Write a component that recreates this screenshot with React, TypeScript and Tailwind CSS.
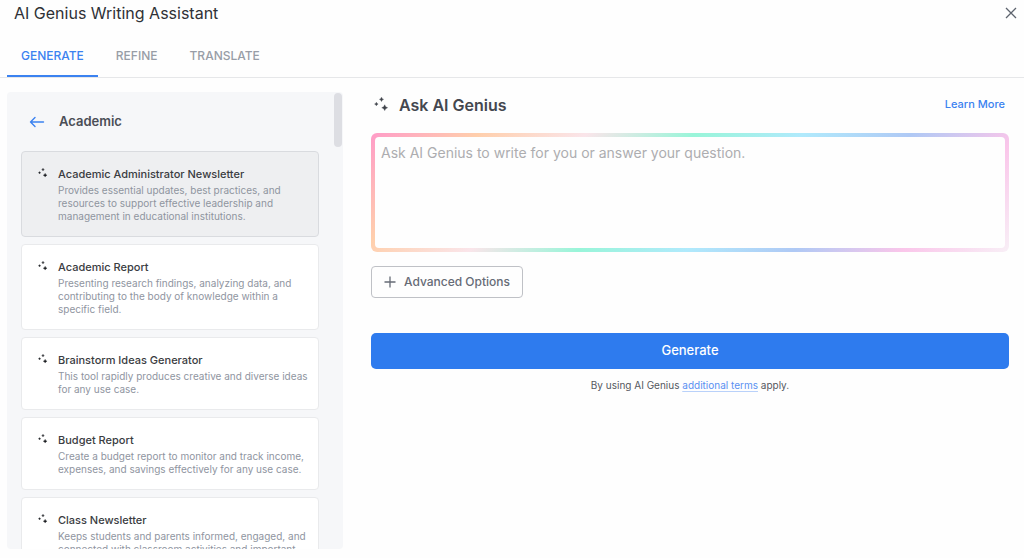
import { useState } from 'react';

const tabs = ['Generate', 'Refine', 'Translate'];

const templates = [
  {
    title: 'Academic Administrator Newsletter',
    description:
      'Provides essential updates, best practices, and resources to support effective leadership and management in educational institutions.',
  },
  {
    title: 'Academic Report',
    description:
      'Presenting research findings, analyzing data, and contributing to the body of knowledge within a specific field.',
  },
  {
    title: 'Brainstorm Ideas Generator',
    description: 'This tool rapidly produces creative and diverse ideas for any use case.',
  },
  {
    title: 'Budget Report',
    description:
      'Create a budget report to monitor and track income, expenses, and savings effectively for any use case.',
  },
  {
    title: 'Class Newsletter',
    description: 'Keeps students and parents informed, engaged, and connected with classroom activities and important',
  },
];

function Sparkles({ className }: { className: string }) {
  return (
    <svg viewBox="0 0 16 16" fill="currentColor" stroke="currentColor" strokeWidth="0.4" aria-hidden="true" className={className}>
      <path d="M8 0.2Q8.5 2 10.2 2.5Q8.5 3 8 4.8Q7.5 3 5.8 2.5Q7.5 2 8 0.2Z" />
      <path d="M2.5 5.6Q2.9 7.1 4.4 7.5Q2.9 7.9 2.5 9.4Q2.1 7.9 0.6 7.5Q2.1 7.1 2.5 5.6Z" />
      <path d="M11.4 8.3Q11.9 10.9 14.5 11.4Q11.9 11.9 11.4 14.5Q10.9 11.9 8.3 11.4Q10.9 10.9 11.4 8.3Z" />
    </svg>
  );
}

export default function App() {
  const [activeTab, setActiveTab] = useState('Generate');
  const [selected, setSelected] = useState(0);
  const [prompt, setPrompt] = useState('');

  return (
    <div className="flex h-screen flex-col bg-[#fefefe] pb-[9px] font-[Inter,sans-serif] text-[#3a3d44]">
      {/* Title bar */}
      <header className="flex h-[26px] shrink-0 items-center justify-between pr-[5px] pl-3.5">
        <h1 className="text-base leading-6 text-[#2f3136]">AI Genius Writing Assistant</h1>
        <button type="button" aria-label="Close" className="p-0.5 text-[#5d636e]">
          <svg viewBox="0 0 12 12" fill="none" stroke="currentColor" strokeWidth="1.3" className="size-3">
            <path d="M1 1L11 11M11 1L1 11" />
          </svg>
        </button>
      </header>

      {/* Tabs */}
      <nav className="flex h-[52px] shrink-0 gap-1 border-b border-[#e6e7e9] px-[7px]">
        {tabs.map((tab) => (
          <button
            key={tab}
            type="button"
            onClick={() => setActiveTab(tab)}
            className={`border-b-2 px-3.5 pt-2.5 pb-0 text-[12px] font-medium uppercase ${
              activeTab === tab ? 'border-[#3b82f0] text-[#3b82f0]' : 'border-transparent text-[#989da6]'
            }`}
          >
            {tab}
          </button>
        ))}
      </nav>

      <div className="flex min-h-0 flex-1 gap-7 pt-3.5 pr-[15px] pl-[7px]">
        {/* Template list */}
        <aside className="flex w-[336px] shrink-0 justify-between overflow-hidden rounded bg-[#f6f7f9]">
          <div className="min-h-0 flex-1 overflow-y-auto pr-[15px] pl-3.5 [scrollbar-width:none]">
            <div className="flex h-[59px] items-center gap-3.5 pl-2">
              <button type="button" aria-label="Back" className="text-[#3b82f0]">
                <svg viewBox="0 0 16 12" fill="none" stroke="currentColor" strokeWidth="1.4" strokeLinecap="round" strokeLinejoin="round" className="h-3 w-4">
                  <path d="M14.5 6H1.5M6 1.5L1.5 6L6 10.5" />
                </svg>
              </button>
              <h2 className="text-[13px] font-semibold text-[#4b4e56]">Academic</h2>
            </div>
            <ul className="flex flex-col gap-[7px]">
              {templates.map((item, i) => (
                <li key={item.title}>
                  <button
                    type="button"
                    onClick={() => setSelected(i)}
                    className={`flex w-full gap-2.5 rounded border pt-3 pr-2 pb-[13px] pl-4 text-left ${
                      selected === i ? 'border-[#d9dbdf] bg-[#eeeff1]' : 'border-[#e9eaec] bg-white'
                    }`}
                  >
                    <Sparkles className="mt-1 size-2.5 shrink-0 text-[#1d1f23]" />
                    <span className="flex flex-col">
                      <span className="text-[11px] leading-5 font-medium text-[#3a3c41]">{item.title}</span>
                      <span className="text-[10px] leading-[13px] text-[#8f959f]">{item.description}</span>
                    </span>
                  </button>
                </li>
              ))}
            </ul>
          </div>
          <div className="mt-px mr-px h-[54px] w-2 rounded-full bg-[#dddee3]" />
        </aside>

        {/* Prompt form */}
        <main className="flex min-w-0 flex-1 flex-col">
          <div className="flex h-[25px] items-center justify-between pr-1 pl-[3px]">
            <div className="flex items-center gap-2.5">
              <Sparkles className="size-[15px] text-[#3f424a]" />
              <label htmlFor="prompt" className="text-base font-semibold text-[#44474f]">
                Ask AI Genius
              </label>
            </div>
            <a href="#" className="text-[11px] font-medium text-[#3b82f0]">
              Learn More
            </a>
          </div>

          <div className="mt-4 flex h-[119px] rounded-md bg-[linear-gradient(135deg,#ff9cc8,#ffcfac,#fae5ea,#99f5d9,#b0eafc,#afc9f5,#fac6ea,#f8eff6)] p-1">
            <textarea
              id="prompt"
              value={prompt}
              onChange={(e) => setPrompt(e.target.value)}
              placeholder="Ask AI Genius to write for you or answer your question."
              className="w-full resize-none rounded-sm bg-[#fefefe] px-1.5 py-1.5 text-sm outline-none placeholder:text-[#adadb0]"
            />
          </div>

          <button
            type="button"
            className="mt-3.5 flex h-8 items-center gap-2 self-start rounded border border-[#bfc1c6] px-3 text-[12px] font-medium text-[#666b76]"
          >
            <svg viewBox="0 0 12 12" fill="none" stroke="currentColor" strokeWidth="1.3" aria-hidden="true" className="size-3">
              <path d="M6 0.5V11.5M0.5 6H11.5" />
            </svg>
            Advanced Options
          </button>

          <button type="button" className="mt-[35px] h-9 rounded-[5px] bg-[#2e7bee] text-[13px] font-medium text-white">
            Generate
          </button>

          <p className="mt-2 text-center text-[10px] leading-4 text-[#55585f]">
            By using AI Genius{' '}
            <a href="#" className="text-[#5a90f2] underline decoration-[#b9d1fa] underline-offset-2">
              additional terms
            </a>{' '}
            apply.
          </p>
        </main>
      </div>
    </div>
  );
}
